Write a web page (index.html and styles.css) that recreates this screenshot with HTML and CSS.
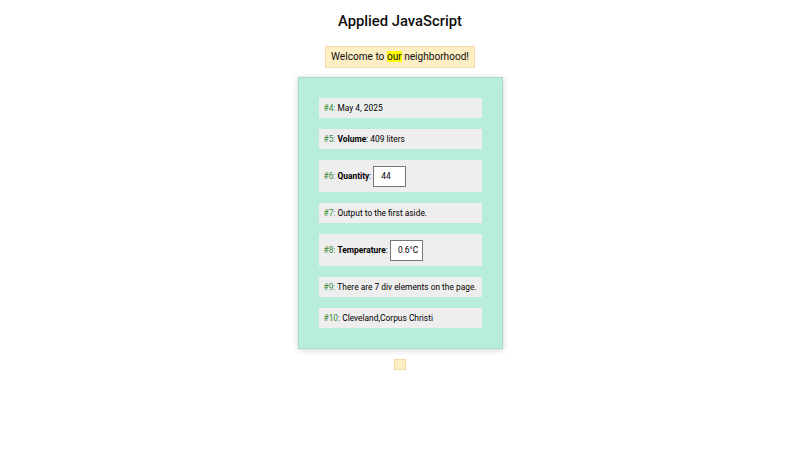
FILE: index.html
```html
<!DOCTYPE html>
<html>
<head>
<meta charset="utf-8">
<link rel="stylesheet" href="styles.css">
</head>
<body>
<h1 class="title">Applied JavaScript</h1>
<div class="welcome-wrap"><p class="welcome">Welcome to <mark class="hl">our</mark> neighborhood!</p></div>
<main class="card">
  <div class="item"><span class="num">#4:</span> May 4, 2025</div>
  <div class="item"><span class="num">#5:</span> <b>Volume</b>: 409 liters</div>
  <div class="item tall"><span class="num">#6:</span> <b>Quantity</b>: <span class="field">44</span></div>
  <div class="item"><span class="num">#7:</span> Output to the first aside.</div>
  <div class="item tall"><span class="num">#8:</span> <b>Temperature</b>: <span class="field">0.6°C</span></div>
  <div class="item"><span class="num">#9:</span> There are 7 div elements on the page.</div>
  <div class="item"><span class="num">#10:</span> Cleveland,Corpus Christi</div>
</main>
<div class="aside-wrap"><aside class="aside"></aside></div>
</body>
</html>
```
FILE: styles.css
```css
html, body { margin: 0; padding: 0; background: #fff; }
body { font-family: Roboto, "Liberation Sans", sans-serif; color: #111; }
.title { margin: 0; padding-top: 11px; text-align: center; font-size: 14.8px; font-weight: 500; line-height: 21px; }
.welcome-wrap { display: flex; justify-content: center; margin-top: 14px; }
.welcome { margin: 0; background: #fdeec3; border: 1px solid #efdca8; padding: 3px 5px; font-size: 10.1px; line-height: 14px; height: 14px; }
.hl { background: #ffff00; color: inherit; padding: 0; }
.card { width: 163px; margin: 9px auto 0; background: #b8eed9; border: 1px solid #a8dcc8; box-shadow: 0 1px 6px rgba(0,0,0,0.18); padding: 20px; display: flex; flex-direction: column; gap: 11px; }
.item { background: #eeeeee; font-size: 8.4px; line-height: 20px; height: 20px; padding: 0 5px; white-space: nowrap; color: #000; }
.item.tall { height: 32px; line-height: 32px; }
.num { color: #3a8c3a; }
.field { display: inline-block; vertical-align: middle; box-sizing: border-box; width: 33px; border: 1px solid #777; background: #fff; padding: 0 0 0 7px; height: 21px; line-height: 19px; margin-left: 0; }
.aside-wrap { display: flex; justify-content: center; margin-top: 10px; }
.aside { width: 10px; height: 9px; background: #fdeec3; border: 1px solid #efdca8; }
```
